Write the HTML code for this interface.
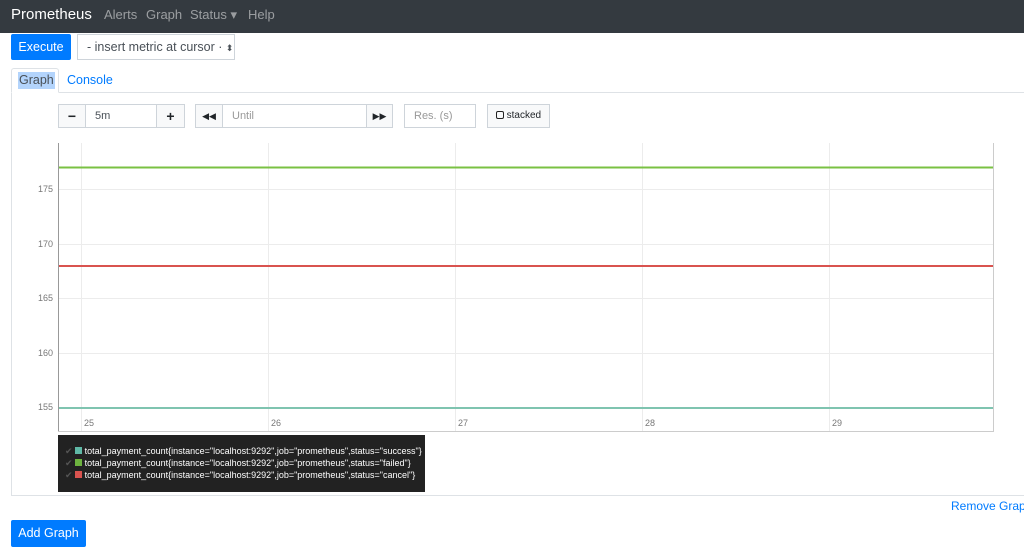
<!DOCTYPE html>
<html><head><meta charset="utf-8"><style>
*{box-sizing:border-box;margin:0;padding:0}
body{width:1024px;height:556px;overflow:hidden;background:#fff;font-family:"Liberation Sans",sans-serif;position:relative;color:#495057}
.a{position:absolute}
.nav{left:0;top:0;width:1024px;height:33px;background:#343a40}
.nav span{position:absolute;top:7px;font-size:13px;color:rgba(255,255,255,.5)}
.btn{background:#007bff;color:#fff;font-size:12.5px;text-align:center;border-radius:2px}
.box{border:1px solid #ced4da;background:#fff;font-size:11px;white-space:nowrap;overflow:hidden}
.gb{background:#f8f9fa;border:1px solid #ced4da;font-size:11px;color:#212529;text-align:center;white-space:nowrap}
</style></head><body>
<div class="a nav">
<span style="left:11px;top:6px;color:#fff;font-size:15px">Prometheus</span>
<span style="left:104px">Alerts</span>
<span style="left:146px">Graph</span>
<span style="left:190px">Status ▾</span>
<span style="left:248px">Help</span>
</div>
<div class="a btn" style="left:11px;top:34px;width:60px;height:26px;line-height:26px">Execute</div>
<div class="a box" style="left:77px;top:34px;width:158px;height:26px;line-height:24px;padding-left:9px;font-size:12.5px">- insert metric at cursor · <span style="font-size:9px">⬍</span></div>
<div class="a" style="left:11px;top:92px;width:1013px;height:404px;border:1px solid #dee2e6;border-right:none"></div>
<div class="a" style="left:11px;top:68px;width:48px;height:25px;border:1px solid #dee2e6;border-bottom:1px solid #fff;background:#fff;border-radius:3px 3px 0 0"></div>
<div class="a" style="left:18px;top:72px;height:17px;background:#b3d4fc;font-size:12.5px;line-height:17px;padding:0 1px">Graph</div>
<div class="a" style="left:67px;top:73px;font-size:12.5px;color:#007bff">Console</div>
<div class="a gb" style="left:58px;top:104px;width:28px;height:24px;line-height:22px;font-weight:bold;font-size:14px">−</div>
<div class="a box" style="left:85px;top:104px;width:72px;height:24px;line-height:22px;padding-left:9px;color:#495057">5m</div>
<div class="a gb" style="left:156px;top:104px;width:29px;height:24px;line-height:22px;font-weight:bold;font-size:14px">+</div>
<div class="a gb" style="left:195px;top:104px;width:28px;height:24px;line-height:22px;font-size:9px">◀◀</div>
<div class="a box" style="left:222px;top:104px;width:145px;height:24px;line-height:22px;padding-left:9px;color:#999">Until</div>
<div class="a gb" style="left:366px;top:104px;width:27px;height:24px;line-height:22px;font-size:9px">▶▶</div>
<div class="a box" style="left:404px;top:104px;width:72px;height:24px;line-height:22px;padding-left:9px;color:#999">Res. (s)</div>
<div class="a gb" style="left:487px;top:104px;width:63px;height:24px;line-height:22px;font-size:10px"><span style="display:inline-block;width:8px;height:8px;border:1.5px solid #222;border-radius:2px;vertical-align:-1px"></span> stacked</div>
<svg class="a" style="left:0;top:135px" width="1024" height="300" font-family="Liberation Sans" font-size="9" fill="#777">
<g stroke="#ececec" stroke-width="1">
<line x1="58" y1="54.5" x2="993" y2="54.5"/><line x1="58" y1="109.5" x2="993" y2="109.5"/><line x1="58" y1="163.5" x2="993" y2="163.5"/><line x1="58" y1="218.5" x2="993" y2="218.5"/><line x1="58" y1="272.5" x2="993" y2="272.5"/>
<line x1="81.5" y1="8" x2="81.5" y2="296"/><line x1="268.5" y1="8" x2="268.5" y2="296"/><line x1="455.5" y1="8" x2="455.5" y2="296"/><line x1="642.5" y1="8" x2="642.5" y2="296"/><line x1="829.5" y1="8" x2="829.5" y2="296"/>
</g>
<line x1="58.5" y1="8" x2="58.5" y2="297" stroke="#999"/>
<line x1="58" y1="296.5" x2="994" y2="296.5" stroke="#ccc"/>
<line x1="993.5" y1="8" x2="993.5" y2="297" stroke="#ccc"/>
<line x1="59" y1="32.5" x2="993" y2="32.5" stroke="#7ac143" stroke-width="2"/>
<line x1="59" y1="131" x2="993" y2="131" stroke="#d9534f" stroke-width="2"/>
<line x1="59" y1="273" x2="993" y2="273" stroke="#7fc4b0" stroke-width="2"/>
<text x="38" y="57">175</text><text x="38" y="112">170</text><text x="38" y="166">165</text><text x="38" y="221">160</text><text x="38" y="275">155</text>
<text x="84" y="291">25</text><text x="271" y="291">26</text><text x="458" y="291">27</text><text x="645" y="291">28</text><text x="832" y="291">29</text>
</svg>
<div class="a" style="left:58px;top:435px;width:367px;height:57px;background:#222;color:#fff;font-size:9px;padding:10px 0 0 7px;line-height:12px;white-space:nowrap;overflow:hidden">
<div><span style="color:#555">✔</span> <span style="display:inline-block;width:7px;height:7px;background:#5fb8a6"></span> total_payment_count{instance="localhost:9292",job="prometheus",status="success"}</div>
<div><span style="color:#555">✔</span> <span style="display:inline-block;width:7px;height:7px;background:#6db33f"></span> total_payment_count{instance="localhost:9292",job="prometheus",status="failed"}</div>
<div><span style="color:#555">✔</span> <span style="display:inline-block;width:7px;height:7px;background:#d9534f"></span> total_payment_count{instance="localhost:9292",job="prometheus",status="cancel"}</div>
</div>
<div class="a" style="left:951px;top:499px;font-size:12px;color:#007bff;white-space:nowrap">Remove Graph</div>
<div class="a btn" style="left:11px;top:520px;width:75px;height:27px;line-height:27px">Add Graph</div>
</body></html>
